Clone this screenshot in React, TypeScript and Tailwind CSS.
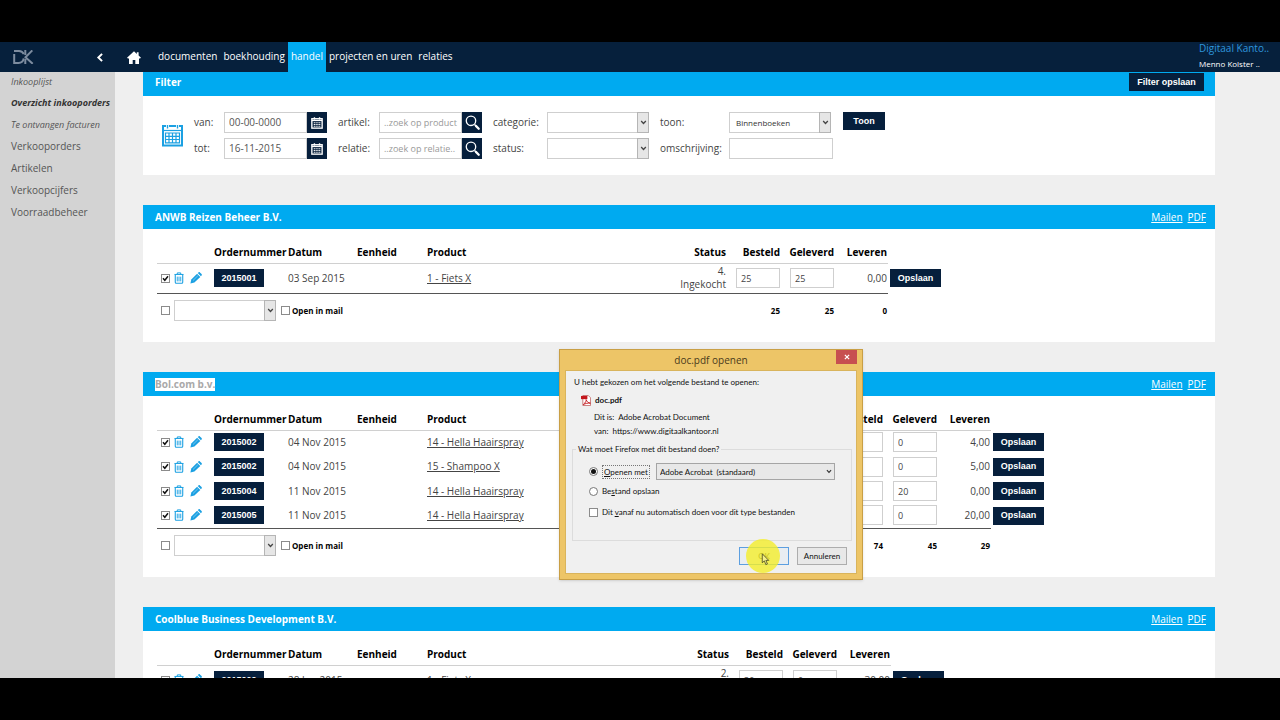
import { useId, type ReactNode } from "react";

type Row = {
  nr: string;
  date: string;
  product: string;
  status: string;
  ordered: string;
  delivered: string;
  open: string;
};

type Supplier = {
  name: string;
  selected?: boolean;
  productCol: string;
  rowHeight: string;
  rows: Row[];
  totals: [string, string, string];
};

const suppliers: Supplier[] = [
  {
    name: "ANWB Reizen Beheer B.V.",
    productCol: "w-[239px]",
    rowHeight: "h-[30px]",
    rows: [
      { nr: "2015001", date: "03 Sep 2015", product: "1 - Fiets X", status: "4. Ingekocht", ordered: "25", delivered: "25", open: "0,00" },
    ],
    totals: ["25", "25", "0"],
  },
  {
    name: "Bol.com b.v.",
    selected: true,
    productCol: "w-[342px]",
    rowHeight: "h-[24px] even:h-[25px]",
    rows: [
      { nr: "2015002", date: "04 Nov 2015", product: "14 - Hella Haairspray", status: "", ordered: "4", delivered: "0", open: "4,00" },
      { nr: "2015002", date: "04 Nov 2015", product: "15 - Shampoo X", status: "", ordered: "5", delivered: "0", open: "5,00" },
      { nr: "2015004", date: "11 Nov 2015", product: "14 - Hella Haairspray", status: "", ordered: "20", delivered: "20", open: "0,00" },
      { nr: "2015005", date: "11 Nov 2015", product: "14 - Hella Haairspray", status: "", ordered: "20", delivered: "0", open: "20,00" },
    ],
    totals: ["74", "45", "29"],
  },
  {
    name: "Coolblue Business Development B.V.",
    productCol: "w-[242px]",
    rowHeight: "h-[30px]",
    rows: [
      { nr: "2015009", date: "28 Jun 2015", product: "1 - Fiets X", status: "2. Bestelling", ordered: "30", delivered: "0", open: "30,00" },
    ],
    totals: ["30", "0", "30"],
  },
];

function Button({ children, className = "" }: { children: ReactNode; className?: string }) {
  return (
    <button type="button" className={`h-[18px] bg-[#061f3c] font-['Liberation_Sans',sans-serif] text-[9px] leading-none font-bold whitespace-nowrap text-white ${className}`}>
      {children}
    </button>
  );
}

function Check({ label, checked = false, className = "" }: { label?: string; checked?: boolean; className?: string }) {
  return (
    <span className={`inline-grid size-[9px] shrink-0 ${className}`}>
      <input type="checkbox" aria-label={label} defaultChecked={checked} className="peer col-start-1 row-start-1 size-[9px] appearance-none border border-[#8b8b8b] bg-white" />
      <svg viewBox="0 0 9 9" className="pointer-events-none invisible col-start-1 row-start-1 size-[9px] peer-checked:visible" fill="none" stroke="#111" strokeWidth="1.5">
        <path d="M2 4.3 3.8 6.3 7 2.3" />
      </svg>
    </span>
  );
}

function Dropdown({ id, label, value = "", className = "" }: { id?: string; label?: string; value?: string; className?: string }) {
  return (
    <span className={`inline-grid h-[21px] w-[102px] ${className}`}>
      <select id={id} aria-label={label} className="col-start-1 row-start-1 appearance-none border border-[#cfcfcf] bg-white pl-[6px] text-[8px] text-[#333]">
        <option>{value}</option>
      </select>
      <span className="pointer-events-none col-start-1 row-start-1 grid w-[12px] place-items-center justify-self-end border border-[#b5b5b5] bg-[#e6e6e6]">
        <svg viewBox="0 0 8 6" className="h-[5px] w-[7px]" fill="none" stroke="#444" strokeWidth="1.5">
          <path d="M1.2 1.2 4 4.2 6.8 1.2" />
        </svg>
      </span>
    </span>
  );
}

function CalendarGlyph() {
  return (
    <svg viewBox="0 0 14 14" className="size-[12px]" fill="none" stroke="#fff">
      <rect x="1" y="2" width="12" height="11" strokeWidth="1.6" />
      <path d="M1 4h12" strokeWidth="1.6" />
      <path d="M4 .3v2.500M10 .3v2.500" strokeWidth="1.6" />
      <path d="M3.200 6.800h7.800M3.200 8.800h7.800M3.200 10.800h7.800" strokeWidth="1.2" strokeDasharray="1.400 .7" />
    </svg>
  );
}

function SearchGlyph() {
  return (
    <svg viewBox="0 0 18 18" className="size-[17px]" fill="none" stroke="#fff">
      <circle cx="7.4" cy="7.2" r="5" strokeWidth="1.4" />
      <path d="m11.2 11.2 1.5 1.5" strokeWidth="1.4" />
      <path d="m12.6 12.6 3 3" strokeWidth="2.4" strokeLinecap="round" />
    </svg>
  );
}

function TrashGlyph() {
  return (
    <svg viewBox="0 0 11 13" className="h-[12px] w-[10px]" fill="none" stroke="#1ba0e2">
      <path d="M.5 2.6h10M3.6 2.4V.9h3.8v1.5" strokeWidth="1.1" />
      <path d="M1.4 2.8v8.4c0 .7.4 1.1 1 1.1h6.2c.6 0 1-.4 1-1.1V2.8" strokeWidth="1.2" />
      <path d="M3.6 5v5.2M5.500 5v5.2M7.400 5v5.2" strokeWidth="1" />
    </svg>
  );
}

function PencilGlyph() {
  return (
    <svg viewBox="0 0 12 12" className="size-[12px]" fill="#1ba0e2">
      <path d="M1.300 7.400 7.100 1.700l3.200 3.200-5.900 5.700L.4 11.600z" />
      <path d="m7.800 1.100.7-.7c.4-.4 1-.4 1.400 0l1.700 1.700c.4.4.4 1 0 1.400l-.7.7z" />
      <path d="m3 8.500 4.900-4.800" stroke="#fff" strokeWidth=".4" />
    </svg>
  );
}

function Field({ id, value, placeholder, icon, action }: { id: string; value?: string; placeholder?: string; icon: ReactNode; action: string }) {
  return (
    <div className="flex h-[21px]">
      <input id={id} defaultValue={value} placeholder={placeholder} className="w-[83px] border border-[#cfcfcf] bg-white pl-[4px] text-[10px] text-[#555] placeholder:text-[9px] placeholder:text-[#999]" />
      <button type="button" aria-label={action} className="grid w-[20px] place-items-center bg-[#061f3c]">
        {icon}
      </button>
    </div>
  );
}

function FilterPanel() {
  return (
    <section className="bg-white">
      <header className="flex h-[24px] items-start justify-between bg-[#00aaf0] pt-px pr-[11px] pl-[12px]">
        <h2 className="text-[10px] leading-[18px] font-bold text-white">Filter</h2>
        <Button className="w-[75px]">Filter opslaan</Button>
      </header>
      <form className="grid grid-cols-[32px_30px_114px_41px_114px_54px_113px_69px_114px_auto] items-center justify-start gap-y-[5px] py-[16px] pl-[19px] text-[10px] text-[#444]">
        <svg viewBox="0 0 21 22" className="row-span-2 h-[22px] w-[21px]" fill="none" stroke="#1ba0e2">
          <rect x="1" y="1" width="19" height="19.500" strokeWidth="2" />
          <path d="M1 5.500h19" strokeWidth="1.200" />
          <path d="M5.500 0v4M15.500 0v4" stroke="#fff" strokeWidth="3" />
          <path d="M5.500 0v3.600M15.500 0v3.600" strokeWidth="1.400" />
          <path d="M3.500 8h14v9.800h-14zM3.500 11.300h14M3.500 14.500h14M7 8v9.800M10.500 8v9.800M14 8v9.800" strokeWidth="1.200" />
        </svg>
        <label htmlFor="van">van:</label>
        <Field id="van" value="00-00-0000" icon={<CalendarGlyph />} action="Kies datum van" />
        <label htmlFor="artikel">artikel:</label>
        <Field id="artikel" placeholder="..zoek op product" icon={<SearchGlyph />} action="Zoek artikel" />
        <label htmlFor="categorie">categorie:</label>
        <Dropdown id="categorie" />
        <label htmlFor="toon">toon:</label>
        <Dropdown id="toon" value="Binnenboeken" />
        <Button className="w-[42px] self-start">Toon</Button>

        <label htmlFor="tot">tot:</label>
        <Field id="tot" value="16-11-2015" icon={<CalendarGlyph />} action="Kies datum tot" />
        <label htmlFor="relatie">relatie:</label>
        <Field id="relatie" placeholder="..zoek op relatie.." icon={<SearchGlyph />} action="Zoek relatie" />
        <label htmlFor="status">status:</label>
        <Dropdown id="status" />
        <label htmlFor="omschrijving">omschrijving:</label>
        <input id="omschrijving" className="h-[21px] w-[104px] border border-[#cfcfcf] bg-white px-[4px]" />
      </form>
    </section>
  );
}

function Quantity({ value, label }: { value: string; label: string }) {
  return <input aria-label={label} defaultValue={value} className="block h-[20px] w-[44px] border border-[#cfcfcf] bg-white pl-[4px] text-[9px] text-[#444]" />;
}

function SupplierPanel({ supplier }: { supplier: Supplier }) {
  const mailId = useId();
  return (
    <section className="bg-white">
      <header className="flex h-[24px] items-center justify-between bg-[#00aaf0] pr-[9px] pl-[12px] text-[10px] text-white">
        <h2 className={supplier.selected ? "bg-white leading-[13px] font-bold text-[#a9a9a9]" : "font-bold"}>{supplier.name}</h2>
        <nav className="flex gap-[5px]">
          <a href="#mailen" className="underline">Mailen</a>
          <a href="#pdf" className="underline">PDF</a>
        </nav>
      </header>
      <div className="px-[14px] py-[14px]">
        <table className="w-px table-fixed border-collapse text-[10px] leading-[13px] whitespace-nowrap text-[#444]">
          <colgroup>
            <col className="w-[57px]" />
            <col className="w-[74px]" />
            <col className="w-[69px]" />
            <col className="w-[70px]" />
            <col className={supplier.productCol} />
            <col className="w-[60px]" />
            <col className="w-[54px]" />
            <col className="w-[54px]" />
            <col className="w-[54px]" />
            <col className="w-[54px]" />
          </colgroup>
          <thead>
            <tr className="h-[20px] text-left text-black *:border-b *:border-[#d0d0d0]">
              <td />
              <th>Ordernummer</th>
              <th>Datum</th>
              <th>Eenheid</th>
              <th>Product</th>
              <th className="text-right">Status</th>
              <th className="text-right">Besteld</th>
              <th className="text-right">Geleverd</th>
              <th className="pr-px text-right">Leveren</th>
            </tr>
          </thead>
          <tbody>
            {supplier.rows.map((row, i) => (
              <tr key={i} className={`${supplier.rowHeight} last:*:not-last:border-b last:*:not-last:border-[#555]`}>
                <td>
                  <div className="flex items-center pl-[4px]">
                    <Check label={`Order ${row.nr}`} checked />
                    <button type="button" aria-label="Verwijderen" className="ml-[4px]"><TrashGlyph /></button>
                    <button type="button" aria-label="Bewerken" className="ml-[6px]"><PencilGlyph /></button>
                  </div>
                </td>
                <td><Button className="block w-[50px]">{row.nr}</Button></td>
                <td>{row.date}</td>
                <td />
                <td><a href="#product" className="underline">{row.product}</a></td>
                <td className="pl-[14px] text-right whitespace-normal">{row.status}</td>
                <td className="pl-[10px]"><Quantity value={row.ordered} label="Besteld" /></td>
                <td className="pl-[10px]"><Quantity value={row.delivered} label="Geleverd" /></td>
                <td className="pr-px text-right">{row.open}</td>
                <td className="pl-[2px]"><Button className="block w-[51px]">Opslaan</Button></td>
              </tr>
            ))}
          </tbody>
          <tfoot>
            <tr className="h-[35px] text-right text-[8px] font-bold text-black">
              <td colSpan={6}>
                <div className="flex items-center pl-[4px]">
                  <Check label="Alles selecteren" />
                  <Dropdown label="Actie" className="ml-[4px]" />
                  <label htmlFor={mailId} className="ml-[5px] flex items-center gap-[2px]">
                    <input id={mailId} type="checkbox" className="size-[9px] appearance-none border border-[#8b8b8b] bg-white" />
                    Open in mail
                  </label>
                </div>
              </td>
              <td>{supplier.totals[0]}</td>
              <td>{supplier.totals[1]}</td>
              <td className="pr-px">{supplier.totals[2]}</td>
            </tr>
          </tfoot>
        </table>
      </div>
    </section>
  );
}

function TopBar() {
  const item = "flex h-full items-center px-[3px] pb-[2px]";
  return (
    <header className="flex h-[30px] shrink-0 items-center bg-[#06203c] text-[10px] text-white">
      <a href="#start" aria-label="Digitaal Kantoor" className="ml-[13px]">
        <svg viewBox="0 0 21 14" className="h-[14px] w-[21px]" fill="none" stroke="#7d8c9f" strokeWidth="2">
          <path d="M1.200 4V13h4.300c2.800 0 4.800-2 5.200-4.600" />
          <path d="M1 1h5c2.300 0 4 1.200 4.800 3.200" />
          <path d="M12.300 0v5M12.300 9v5M19.300.4l-6.800 6.800 7.200 6.600" />
        </svg>
      </a>
      <button type="button" aria-label="Menu inklappen" className="ml-[62px]">
        <svg viewBox="0 0 8 10" className="h-[9px] w-[8px]" fill="none" stroke="#fff" strokeWidth="2.2">
          <path d="M6.3 1 2.2 5l4.1 4" />
        </svg>
      </button>
      <a href="#home" aria-label="Home" className="ml-[23px]">
        <svg viewBox="0 0 14 13" className="h-[13px] w-[14px]" fill="#fff">
          <path d="M7 .3 0 6.7l1 .9h1V13h3.7V9h2.6v4H12V7.600h1l1-.9-2.400-2.200V1.200H9.800v1.700z" />
        </svg>
      </a>
      <nav className="ml-[14px] flex h-full">
        <a href="#documenten" className={item}>documenten</a>
        <a href="#boekhouding" className={item}>boekhouding</a>
        <a href="#handel" className={`${item} bg-[#00aaf0]`}>handel</a>
        <a href="#projecten" className={item}>projecten en uren</a>
        <a href="#relaties" className={item}>relaties</a>
      </nav>
      <div className="ml-auto w-[81px] pb-[2px] whitespace-nowrap">
        <p className="leading-[15px] text-[#2e96dc]">Digitaal Kanto..</p>
        <p className="text-[8px] leading-[15px]">Menno Kolster ..</p>
      </div>
    </header>
  );
}

function Sidebar() {
  return (
    <nav className="flex w-[115px] shrink-0 flex-col bg-[#d3d3d3] pl-[11px] text-[10px] leading-[22px] whitespace-nowrap text-[#555]">
      <a href="#inkooplijst" className="text-[9px] leading-[20px] italic">Inkooplijst</a>
      <a href="#inkooporders" className="text-[9px] leading-[22px] font-bold text-[#333] italic">Overzicht inkooporders</a>
      <a href="#facturen" className="text-[9px] leading-[21px] italic">Te ontvangen facturen</a>
      <a href="#verkooporders">Verkooporders</a>
      <a href="#artikelen">Artikelen</a>
      <a href="#verkoopcijfers">Verkoopcijfers</a>
      <a href="#voorraadbeheer">Voorraadbeheer</a>
    </nav>
  );
}

function Radio({ id, checked }: { id: string; checked?: boolean }) {
  return (
    <span className="inline-grid size-[9px] shrink-0 place-items-center">
      <input id={id} type="radio" name="actie" defaultChecked={checked} className="peer col-start-1 row-start-1 size-[9px] appearance-none rounded-full border border-[#777] bg-white" />
      <span className="pointer-events-none invisible col-start-1 row-start-1 size-[5px] rounded-full bg-[#111] peer-checked:visible" />
    </span>
  );
}

function DownloadDialog() {
  return (
    <div role="dialog" aria-labelledby="dialog-title" className="absolute top-[349px] left-[559px] w-[304px] border border-[#c99f45] bg-[#edc567] px-[5px] pb-[5px] font-['Lato','Open_Sans',sans-serif] text-[8px] leading-[12px] text-[#111] shadow-sm">
      <div className="grid h-[20px] grid-cols-[21px_1fr_21px] items-center font-['Open_Sans',sans-serif]">
        <h2 id="dialog-title" className="col-start-2 text-center text-[10px] text-[#4a3a1c]">doc.pdf openen</h2>
        <button type="button" aria-label="Sluiten" className="grid h-[14px] place-items-center self-start bg-[#c75050]">
          <svg viewBox="0 0 7 7" className="size-[6px]" stroke="#fff" strokeWidth="1.4">
            <path d="m1 1 5 5M6 1 1 6" />
          </svg>
        </button>
      </div>
      <div className="border border-[#d9b45c] bg-[#f0f0f0] px-[8px] pt-[5px] pb-[8px]">
        <p>U hebt gekozen om het volgende bestand te openen:</p>
        <p className="mt-[6px] flex items-center gap-[4px] pl-[7px] font-bold">
          <svg viewBox="0 0 11 12" className="h-[11px] w-[10px]">
            <path d="M2 .5h6l2.500 2.500v8.500H2z" fill="#fff" stroke="#b55" strokeWidth=".8" />
            <rect x="0" y="1" width="7" height="3.500" fill="#c4161c" />
            <path d="M2.500 10.500C5 8.500 6 6 5.600 5c1 2.500 2.400 3.700 4.700 3.900C7.500 8.700 5 9.200 2.500 10.500z" fill="none" stroke="#c4161c" strokeWidth="1" />
          </svg>
          doc.pdf
        </p>
        <dl className="mt-[5px] flex flex-col gap-[2px] pl-[20px]">
          <div className="flex gap-[4px]"><dt>Dit is:</dt><dd>Adobe Acrobat Document</dd></div>
          <div className="flex gap-[4px]"><dt>van:</dt><dd>https://www.digitaalkantoor.nl</dd></div>
        </dl>
        <fieldset className="mt-[6px] mr-[6px] -ml-[2px] h-[98px] border border-[#dcdcdc] px-[16px]">
          <legend className="-ml-[13px] px-[2px]">Wat moet Firefox met dit bestand doen?</legend>
          <div className="mt-[8px] flex items-center gap-[4px]">
            <Radio id="open-met" checked />
            <label htmlFor="open-met" className="w-[48px] border border-dotted border-[#777] px-[1px] whitespace-nowrap"><u>O</u>penen met</label>
            <span className="ml-[2px] inline-grid h-[17px] w-[179px] shrink-0">
              <select aria-label="Programma" className="col-start-1 row-start-1 appearance-none border border-[#a5a5a5] bg-[#e8e8e8] pl-[3px]">
                <option>Adobe Acrobat&nbsp; (standaard)</option>
              </select>
              <svg viewBox="0 0 8 6" className="pointer-events-none col-start-1 row-start-1 mr-[3px] h-[5px] w-[6px] self-center justify-self-end" fill="none" stroke="#333" strokeWidth="1.5">
                <path d="M1.200 1.200 4 4.200 6.800 1.200" />
              </svg>
            </span>
          </div>
          <div className="mt-[5px] flex items-center gap-[4px]">
            <Radio id="opslaan" />
            <label htmlFor="opslaan">Be<u>s</u>tand opslaan</label>
          </div>
          <label className="mt-[9px] flex items-center gap-[4px] whitespace-nowrap">
            <Check />
            <span>Dit <u>v</u>anaf nu automatisch doen voor dit type bestanden</span>
          </label>
        </fieldset>
        <div className="mt-[6px] flex justify-end gap-[8px] pr-px">
          <button type="button" className="relative h-[18px] w-[50px] border border-[#5d9fe0] bg-[#e8edf2]">
            OK
            <span className="absolute -top-[9px] left-[6px] size-[34px] rounded-full bg-[#f4ee2b]/80" />
            <svg viewBox="0 0 10 16" className="absolute top-[5px] left-[21px] h-[13px] w-[9px]" fill="#f4f08a" stroke="#4a4a20" strokeWidth="1">
              <path d="M1 1v11l2.600-2.300 1.800 4.600 2-.8-1.900-4.400H9z" />
            </svg>
          </button>
          <button type="button" className="h-[18px] w-[50px] border border-[#adadad] bg-[#e8e8e8]">Annuleren</button>
        </div>
      </div>
    </div>
  );
}

export default function App() {
  return (
    <div className="relative flex h-screen flex-col bg-black py-[42px] font-['Open_Sans','Noto_Sans',sans-serif]">
      <TopBar />
      <div className="flex min-h-0 flex-1 overflow-hidden bg-[#efefef]">
        <Sidebar />
        <main className="flex min-w-0 flex-1 flex-col gap-[30px] overflow-hidden pr-[65px] pl-[28px] *:shrink-0">
          <FilterPanel />
          {suppliers.map((s) => (
            <SupplierPanel key={s.name} supplier={s} />
          ))}
        </main>
      </div>
      <DownloadDialog />
    </div>
  );
}
